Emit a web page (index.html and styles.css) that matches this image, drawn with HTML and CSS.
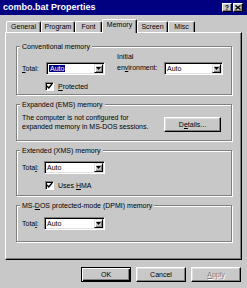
FILE: index.html
```html
<!DOCTYPE html>
<html>
<head>
<meta charset="utf-8">
<link rel="stylesheet" href="styles.css">
</head>
<body>
<div class="window">
  <div class="titlebar">
    <span class="title">combo.bat Properties</span>
    <div class="tb-buttons">
      <span class="tb-btn">?</span>
      <span class="tb-btn"><svg width="6" height="5" viewBox="0 0 6 5"><path d="M0.5 0.5 L5.5 4.5 M5.5 0.5 L0.5 4.5" stroke="#000" stroke-width="1.3"/></svg></span>
    </div>
  </div>
  <div class="tabs">
    <span class="tab w-general">General</span>
    <span class="tab w-program">Program</span>
    <span class="tab w-font">Font</span>
    <span class="tab active w-memory">Memory</span>
    <span class="tab w-screen">Screen</span>
    <span class="tab w-misc">Misc</span>
  </div>
  <div class="panel">
    <div class="group g-conv">
      <span class="legend">Conventional memory</span>
      <div class="row">
        <span class="field-label w24"><u>T</u>otal:</span>
        <div class="combo w59"><span class="val"><span class="sel">Auto</span></span><span class="drop"><svg width="5" height="3" viewBox="0 0 5 3"><path d="M0 0 H5 L2.5 3 Z" fill="#000"/></svg></span></div>
        <span class="env-label">Initial<br>en<u>v</u>ironment:</span>
        <div class="combo w59"><span class="val">Auto</span><span class="drop"><svg width="5" height="3" viewBox="0 0 5 3"><path d="M0 0 H5 L2.5 3 Z" fill="#000"/></svg></span></div>
      </div>
      <div class="check">
        <span class="box"><svg width="7" height="7" viewBox="0 0 7 7"><path d="M1 3 L2.8 5 L6 1" stroke="#000" stroke-width="1.4" fill="none"/></svg></span>
        <span><u>P</u>rotected</span>
      </div>
    </div>
    <div class="group g-ems">
      <span class="legend">Expanded (EMS) memory</span>
      <div class="ems-row">
        <span class="ems-text">The computer is not configured for<br>expanded memory in MS-DOS sessions.</span>
        <span class="btn btn-details">D<u>e</u>tails...</span>
      </div>
    </div>
    <div class="group g-xms">
      <span class="legend">Extended (XMS) memory</span>
      <div class="row">
        <span class="field-label w22">Tota<u>l</u>:</span>
        <div class="combo w61"><span class="val">Auto</span><span class="drop"><svg width="5" height="3" viewBox="0 0 5 3"><path d="M0 0 H5 L2.5 3 Z" fill="#000"/></svg></span></div>
      </div>
      <div class="check">
        <span class="box"><svg width="7" height="7" viewBox="0 0 7 7"><path d="M1 3 L2.8 5 L6 1" stroke="#000" stroke-width="1.4" fill="none"/></svg></span>
        <span>Uses <u>H</u>MA</span>
      </div>
    </div>
    <div class="group g-dpmi">
      <span class="legend">MS-<u>D</u>OS protected-mode (DPMI) memory</span>
      <div class="row">
        <span class="field-label w22">Tota<u>l</u>:</span>
        <div class="combo w61"><span class="val">Auto</span><span class="drop"><svg width="5" height="3" viewBox="0 0 5 3"><path d="M0 0 H5 L2.5 3 Z" fill="#000"/></svg></span></div>
      </div>
    </div>
  </div>
  <div class="actions">
    <span class="btn btn-action default">OK</span>
    <span class="btn btn-action">Cancel</span>
    <span class="btn btn-action disabled"><u>A</u>pply</span>
  </div>
</div>
</body>
</html>
```
FILE: styles.css
```css
body {
  margin: 0;
  background: #c8c8c8;
  font: 7px/9px "Liberation Sans", Arial, sans-serif;
  color: #000;
}
u { text-underline-offset: 1px; }
.window {
  width: 247px;
  height: 288px;
  overflow: hidden;
  background: #c8c8c8;
}
.titlebar {
  height: 15px;
  background: #000080;
  display: flex;
  align-items: center;
  padding: 0 4px 0 3px;
}
.title {
  color: #fff;
  font-weight: bold;
  font-size: 9px;
  line-height: 15px;
}
.tb-buttons {
  margin-left: auto;
  display: flex;
  gap: 1px;
}
.tb-btn {
  width: 10px;
  height: 9px;
  box-sizing: border-box;
  background: #c8c8c8;
  border: 1px solid;
  border-color: #fff #000 #000 #fff;
  box-shadow: inset -1px -1px #808080;
  display: flex;
  align-items: center;
  justify-content: center;
  font-weight: bold;
  font-size: 7px;
  line-height: 7px;
}
.tabs {
  display: flex;
  align-items: flex-end;
  height: 13px;
  margin-top: 4px;
  padding-left: 6px;
}
.tab {
  box-sizing: border-box;
  height: 11px;
  border: 1px solid;
  border-bottom: 0;
  border-color: #fff #000 transparent #fff;
  box-shadow: inset -1px 0 #808080;
  border-radius: 2px 2px 0 0;
  text-align: center;
  line-height: 9px;
}
.tab.active {
  height: 14px;
  margin-bottom: -1px;
  position: relative;
  z-index: 1;
  background: #c8c8c8;
  line-height: 10px;
}
.w-general { width: 35px; }
.w-program { width: 34px; }
.w-font { width: 27px; }
.w-memory { width: 35px; }
.w-screen { width: 31px; }
.w-misc { width: 27px; }
.panel {
  margin-left: 5px;
  width: 237px;
  height: 228px;
  box-sizing: border-box;
  border: 1px solid;
  border-color: #fff #000 #000 #fff;
  box-shadow: inset -1px -1px #808080;
  padding: 13px 9px 0 10px;
  display: flex;
  flex-direction: column;
  gap: 9px;
}
.group {
  position: relative;
  box-sizing: border-box;
  border: 1px solid #808080;
  box-shadow: inset 1px 1px #fff, 1px 1px #fff;
  padding-left: 5px;
  flex: none;
}
.legend {
  position: absolute;
  top: -5px;
  left: 3px;
  padding: 0 2px;
  background: #c8c8c8;
  line-height: 9px;
  white-space: nowrap;
}
.g-conv { height: 49px; padding-top: 4px; }
.g-ems { height: 37px; padding-top: 8px; }
.g-xms { height: 46px; padding-top: 10px; }
.g-dpmi { height: 37px; padding-top: 11px; }
.row {
  display: flex;
  align-items: flex-end;
}
.field-label { line-height: 13px; }
.w24 { width: 24px; }
.w22 { width: 22px; }
.env-label {
  margin-left: 12px;
  width: 47px;
  line-height: 11px;
  margin-bottom: 2px;
}
.combo {
  box-sizing: border-box;
  height: 13px;
  background: #fff;
  border: 1px solid;
  border-color: #808080 #fff #fff #808080;
  box-shadow: inset 1px 1px #000, inset -1px -1px #dfdfdf;
  display: flex;
  align-items: center;
  padding: 1px;
}
.w59 { width: 59px; }
.w61 { width: 61px; }
.val {
  flex: 1;
  padding-left: 1px;
  line-height: 9px;
}
.sel {
  background: #000080;
  color: #fff;
  padding: 0 1px;
}
.drop {
  width: 9px;
  height: 9px;
  box-sizing: border-box;
  background: #c8c8c8;
  border: 1px solid;
  border-color: #dfdfdf #000 #000 #dfdfdf;
  box-shadow: inset 1px 1px #fff, inset -1px -1px #808080;
  display: flex;
  align-items: center;
  justify-content: center;
}
.drop svg { display: block; }
.check {
  display: flex;
  align-items: center;
  margin-top: 7px;
  padding-left: 23px;
  line-height: 9px;
}
.box {
  width: 9px;
  height: 9px;
  box-sizing: border-box;
  background: #fff;
  border: 1px solid;
  border-color: #808080 #fff #fff #808080;
  box-shadow: inset 1px 1px #000;
  display: flex;
  align-items: center;
  justify-content: center;
  margin-right: 4px;
}
.box svg { display: block; }
.ems-row {
  display: flex;
  align-items: flex-start;
}
.ems-text { line-height: 9px; white-space: nowrap; }
.btn {
  box-sizing: border-box;
  height: 15px;
  background: #c8c8c8;
  border: 1px solid;
  border-color: #fff #000 #000 #fff;
  box-shadow: inset -1px -1px #808080, inset 1px 1px #dfdfdf;
  display: flex;
  align-items: center;
  justify-content: center;
  line-height: 9px;
}
.btn-details {
  width: 57px;
  margin-left: auto;
  margin-right: 10px;
  margin-top: 4px;
}
.actions {
  display: flex;
  justify-content: flex-end;
  gap: 5px;
  margin-top: 7px;
  padding-right: 6px;
}
.btn-action { width: 50px; }
.btn.default {
  border-color: #000;
  box-shadow: inset 1px 1px #fff, inset -1px -1px #000, inset -2px -2px #808080;
}
.btn.disabled {
  color: #808080;
  text-shadow: 1px 1px #fff;
}
```
